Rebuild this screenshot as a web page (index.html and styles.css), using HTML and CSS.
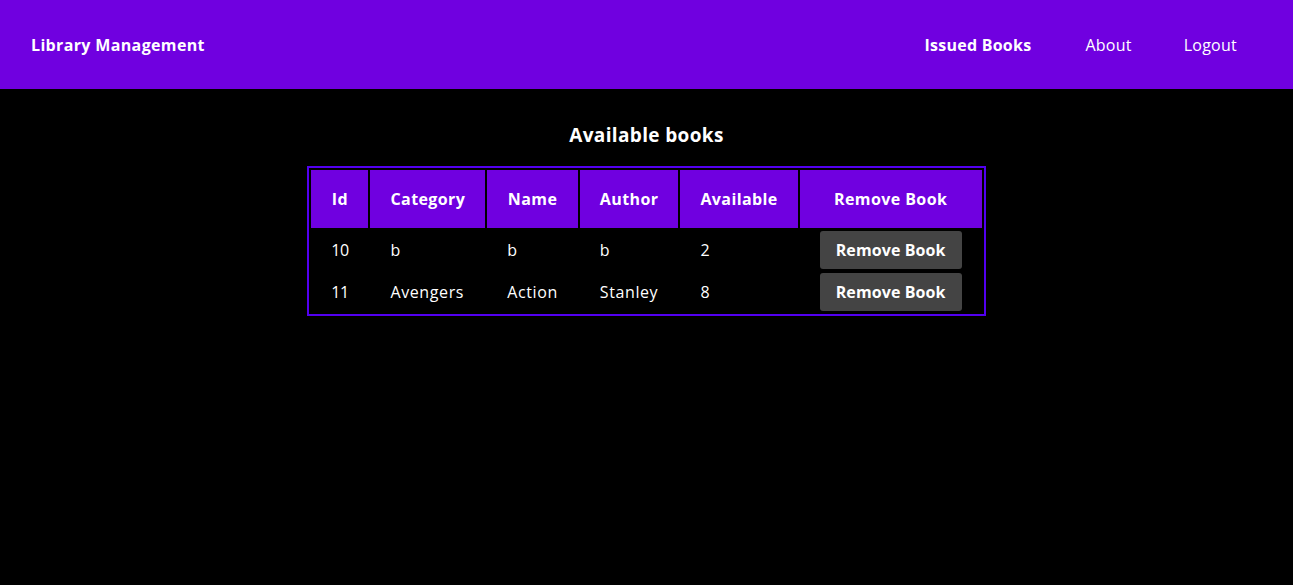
FILE: index.html
```html
<!DOCTYPE html>
<html lang="en">
<head>
<meta charset="utf-8">
<title>Library Management</title>
<link rel="stylesheet" href="styles.css">
</head>
<body>
<nav class="navbar">
  <a class="brand" href="#">Library Management</a>
  <ul class="nav-links">
    <li><a class="nav-link active" href="#">Issued Books</a></li>
    <li><a class="nav-link" href="#">About</a></li>
    <li><a class="nav-link" href="#">Logout</a></li>
  </ul>
</nav>
<main class="content">
  <h2 class="title">Available books</h2>
  <table class="books">
    <thead>
      <tr>
        <th>Id</th>
        <th>Category</th>
        <th>Name</th>
        <th>Author</th>
        <th>Available</th>
        <th>Remove Book</th>
      </tr>
    </thead>
    <tbody>
      <tr>
        <td class="id-cell">10</td>
        <td>b</td>
        <td>b</td>
        <td>b</td>
        <td>2</td>
        <td><button class="remove-btn">Remove Book</button></td>
      </tr>
      <tr>
        <td class="id-cell">11</td>
        <td>Avengers</td>
        <td>Action</td>
        <td>Stanley</td>
        <td>8</td>
        <td><button class="remove-btn">Remove Book</button></td>
      </tr>
    </tbody>
  </table>
</main>
</body>
</html>
```

FILE: styles.css
```css
* {
  box-sizing: border-box;
}

html, body {
  margin: 0;
  padding: 0;
  background: #000;
  color: #fff;
  font-family: "Open Sans", "DejaVu Sans", sans-serif;
}

.navbar {
  height: 89px;
  background: #7000e0;
  display: flex;
  align-items: center;
  justify-content: space-between;
  padding: 0 30px 0 31px;
}

.brand {
  color: #fff;
  text-decoration: none;
  font-weight: 700;
  font-size: 16px;
  letter-spacing: 0.35px;
}

.nav-links {
  list-style: none;
  margin: 0;
  padding: 0;
  display: flex;
}

.nav-link {
  display: block;
  color: #fff;
  text-decoration: none;
  font-size: 16px;
  letter-spacing: 0.25px;
  padding: 8px 26px;
}

.nav-link.active {
  font-weight: 700;
  margin-right: 2px;
}

.content {
  display: flex;
  flex-direction: column;
  align-items: center;
  padding-top: 34px;
}

.title {
  margin: 0 0 19px;
  font-size: 19px;
  font-weight: 700;
  line-height: 24px;
  letter-spacing: 0.35px;
}

.books {
  border: 2px solid #5200f0;
  border-spacing: 2px;
  font-size: 16px;
}

.books th {
  background: #7000e0;
  font-weight: 700;
  padding: 18px 20px;
  text-align: center;
  line-height: 22px;
  letter-spacing: 0.4px;
}

.books td {
  padding: 1px 20px;
  text-align: left;
  line-height: 22px;
  letter-spacing: 0.6px;
}

.books td.id-cell {
  letter-spacing: -0.6px;
}

.remove-btn {
  background: #444;
  color: #fff;
  border: none;
  border-radius: 3px;
  font-family: inherit;
  font-size: 16px;
  font-weight: 700;
  letter-spacing: 0.1px;
  height: 38px;
  padding: 0 16px;
  cursor: pointer;
}
```
